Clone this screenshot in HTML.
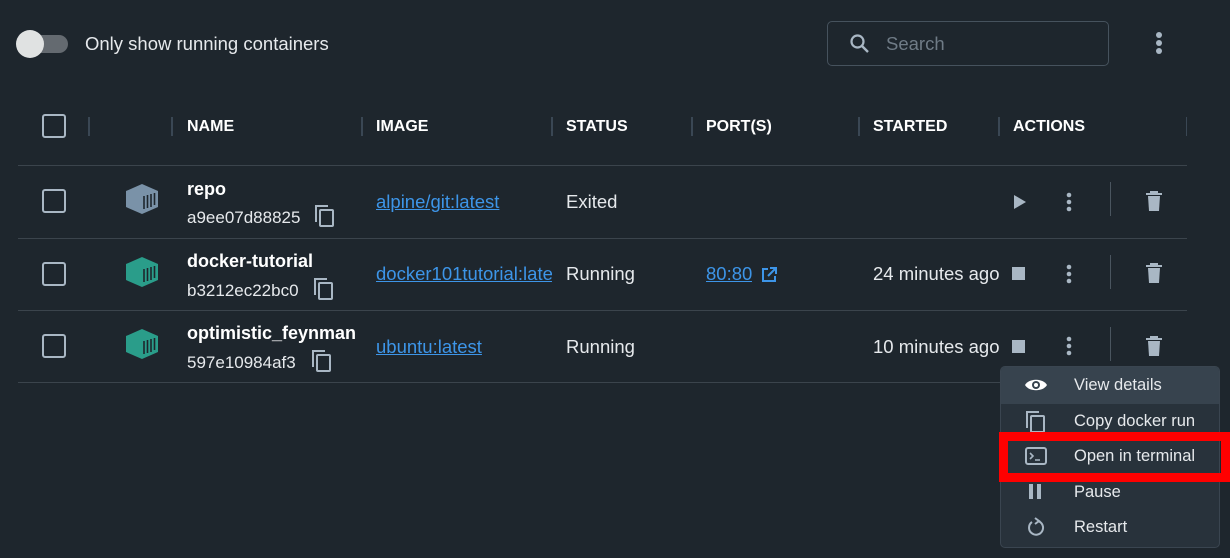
<!DOCTYPE html>
<html><head><meta charset="utf-8"><style>
*{margin:0;padding:0;box-sizing:border-box}
body{width:1230px;height:558px;background:#1e262d;font-family:"Liberation Sans",Arial,sans-serif;color:#e6e9ec;position:relative;overflow:hidden;font-size:18.5px}
.a{position:absolute;white-space:nowrap}
.sep{position:absolute;width:2px;height:19px;background:#3a4754;top:117px}
.hd{position:absolute;top:118px;font-weight:bold;font-size:16px;color:#fff}
.line{position:absolute;left:18px;width:1169px;height:1px;background:#3b444c}
.cb{position:absolute;left:42px;width:24px;height:24px;border:2px solid #a9b7c4;border-radius:3px}
.nm{position:absolute;left:187px;font-weight:bold;font-size:18px;color:#fff}
.id{position:absolute;left:187px;font-size:17px;color:#e6e9ec}
.lk{position:absolute;color:#3d95e8;text-decoration:underline;overflow:hidden;white-space:nowrap}
.vs{position:absolute;left:1110px;width:1px;height:34px;background:#4a555f}
.mi{position:absolute;left:1074px;font-size:16.5px;color:#e6e9ec}
</style></head><body>
<div class="a" style="left:19px;top:35px;width:49px;height:18px;border-radius:9px;background:#646a70"></div>
<div class="a" style="left:16px;top:30px;width:28px;height:28px;border-radius:50%;background:#e0e2e2"></div>
<div class="a" style="left:85px;top:33px;font-size:18.5px;color:#e6e9ec">Only show running containers</div>
<div class="a" style="left:827px;top:21px;width:282px;height:45px;border:1px solid #46525d;border-radius:5px"></div>
<svg class="a" style="left:848px;top:32px" width="24" height="24" viewBox="0 0 24 24"><circle cx="9.5" cy="9.5" r="6" fill="none" stroke="#a9b7c4" stroke-width="2.2"/><path d="M14 14l6 6" stroke="#a9b7c4" stroke-width="2.4"/></svg>
<div class="a" style="left:886px;top:33px;color:#6f7b86">Search</div>
<div class="a" style="left:1156px;top:32px;width:6px;height:6px;border-radius:50%;background:#a9b7c4"></div>
<div class="a" style="left:1156px;top:40px;width:6px;height:6px;border-radius:50%;background:#a9b7c4"></div>
<div class="a" style="left:1156px;top:48px;width:6px;height:6px;border-radius:50%;background:#a9b7c4"></div>
<div class="cb" style="top:114px"></div>
<div class="sep" style="left:88px"></div><div class="sep" style="left:171px"></div><div class="sep" style="left:361px"></div><div class="sep" style="left:551px"></div><div class="sep" style="left:691px"></div><div class="sep" style="left:858px"></div><div class="sep" style="left:998px"></div><div class="sep" style="left:1186px;width:1px"></div>
<div class="hd" style="left:187px">NAME</div><div class="hd" style="left:376px">IMAGE</div><div class="hd" style="left:566px">STATUS</div><div class="hd" style="left:706px">PORT(S)</div><div class="hd" style="left:873px">STARTED</div><div class="hd" style="left:1013px">ACTIONS</div>
<div class="line" style="top:165px"></div><div class="line" style="top:238px"></div><div class="line" style="top:310px"></div><div class="line" style="top:382px"></div>

<div class="cb" style="top:189px"></div><div class="cb" style="top:262px"></div><div class="cb" style="top:334px"></div>
<svg class="a" style="left:124px;top:183px" width="36" height="32" viewBox="0 0 36 32"><path d="M18 1L34 8V24L18 31L2 24V8Z" fill="#7a92a8"/><path d="M20 13v13M23.5 12v13M27 11v13M30.5 10v12" stroke="#1e262d" stroke-width="1.6"/></svg>
<svg class="a" style="left:124px;top:256px" width="36" height="32" viewBox="0 0 36 32"><path d="M18 1L34 8V24L18 31L2 24V8Z" fill="#2a9d8a"/><path d="M20 13v13M23.5 12v13M27 11v13M30.5 10v12" stroke="#1e262d" stroke-width="1.6"/></svg>
<svg class="a" style="left:124px;top:328px" width="36" height="32" viewBox="0 0 36 32"><path d="M18 1L34 8V24L18 31L2 24V8Z" fill="#2a9d8a"/><path d="M20 13v13M23.5 12v13M27 11v13M30.5 10v12" stroke="#1e262d" stroke-width="1.6"/></svg>

<div class="nm" style="top:179px">repo</div><div class="id" style="top:208px">a9ee07d88825</div>
<div class="nm" style="top:251px">docker-tutorial</div><div class="id" style="top:281px">b3212ec22bc0</div>
<div class="nm" style="top:323px">optimistic_feynman</div><div class="id" style="top:353px">597e10984af3</div>
<svg class="a" style="left:314px;top:204px" width="22" height="24" viewBox="0 0 22 24"><path d="M2 18V2h12" fill="none" stroke="#a9b7c4" stroke-width="2"/><rect x="6" y="6" width="13" height="16" rx="1" fill="none" stroke="#a9b7c4" stroke-width="2"/></svg>
<svg class="a" style="left:313px;top:277px" width="22" height="24" viewBox="0 0 22 24"><path d="M2 18V2h12" fill="none" stroke="#a9b7c4" stroke-width="2"/><rect x="6" y="6" width="13" height="16" rx="1" fill="none" stroke="#a9b7c4" stroke-width="2"/></svg>
<svg class="a" style="left:311px;top:349px" width="22" height="24" viewBox="0 0 22 24"><path d="M2 18V2h12" fill="none" stroke="#a9b7c4" stroke-width="2"/><rect x="6" y="6" width="13" height="16" rx="1" fill="none" stroke="#a9b7c4" stroke-width="2"/></svg>

<div class="lk" style="left:376px;top:191px;width:176px">alpine/git:latest</div>
<div class="lk" style="left:376px;top:263px;width:176px">docker101tutorial:latest</div>
<div class="lk" style="left:376px;top:336px;width:176px">ubuntu:latest</div>
<div class="a" style="left:566px;top:191px">Exited</div>
<div class="a" style="left:566px;top:263px">Running</div>
<div class="a" style="left:566px;top:336px">Running</div>
<div class="lk" style="left:706px;top:263px">80:80</div>
<svg class="a" style="left:761px;top:267px" width="16" height="16" viewBox="0 0 16 16"><path d="M7 2H2v12h12V9" fill="none" stroke="#3d95e8" stroke-width="2"/><path d="M9 1h6v6M15 1L7 9" fill="none" stroke="#3d95e8" stroke-width="2"/></svg>
<div class="a" style="left:873px;top:263px;width:126px;overflow:hidden">24 minutes ago</div>
<div class="a" style="left:873px;top:336px;width:126px;overflow:hidden">10 minutes ago</div>

<svg class="a" style="left:1013px;top:194px" width="14" height="16" viewBox="0 0 14 16"><path d="M1 1L13 8L1 15Z" fill="#a9b7c4"/></svg>
<div class="a" style="left:1012px;top:267px;width:13px;height:13px;background:#a9b7c4"></div>
<div class="a" style="left:1012px;top:340px;width:13px;height:13px;background:#a9b7c4"></div>
<svg class="a" style="left:1065px;top:192px" width="8" height="20"><circle cx="4" cy="3" r="2.3" fill="#a9b7c4"/><circle cx="4" cy="10" r="2.3" fill="#a9b7c4"/><circle cx="4" cy="17" r="2.3" fill="#a9b7c4"/></svg>
<svg class="a" style="left:1065px;top:264px" width="8" height="20"><circle cx="4" cy="3" r="2.3" fill="#a9b7c4"/><circle cx="4" cy="10" r="2.3" fill="#a9b7c4"/><circle cx="4" cy="17" r="2.3" fill="#a9b7c4"/></svg>
<svg class="a" style="left:1065px;top:336px" width="8" height="20"><circle cx="4" cy="3" r="2.3" fill="#a9b7c4"/><circle cx="4" cy="10" r="2.3" fill="#a9b7c4"/><circle cx="4" cy="17" r="2.3" fill="#a9b7c4"/></svg>
<div class="vs" style="top:182px"></div><div class="vs" style="top:255px"></div><div class="vs" style="top:327px"></div>
<svg class="a" style="left:1145px;top:191px" width="18" height="20" viewBox="0 0 18 20"><path d="M1 3h16M6 3V1h6v2" stroke="#a9b7c4" stroke-width="2" fill="none"/><path d="M3 5h12l-1 15H4Z" fill="#a9b7c4"/></svg>
<svg class="a" style="left:1145px;top:263px" width="18" height="20" viewBox="0 0 18 20"><path d="M1 3h16M6 3V1h6v2" stroke="#a9b7c4" stroke-width="2" fill="none"/><path d="M3 5h12l-1 15H4Z" fill="#a9b7c4"/></svg>
<svg class="a" style="left:1145px;top:336px" width="18" height="20" viewBox="0 0 18 20"><path d="M1 3h16M6 3V1h6v2" stroke="#a9b7c4" stroke-width="2" fill="none"/><path d="M3 5h12l-1 15H4Z" fill="#a9b7c4"/></svg>

<div class="a" style="left:1000px;top:366px;width:220px;height:182px;background:#28323b;border-radius:5px;border:1px solid #3a4550;overflow:hidden"><div style="height:37px;background:#37434e"></div></div>
<svg class="a" style="left:1024px;top:377px" width="24" height="16" viewBox="0 0 24 16"><path d="M1 8C5 1 19 1 23 8C19 15 5 15 1 8Z" fill="#fff"/><circle cx="12" cy="8" r="4" fill="#37434e"/><circle cx="12" cy="8" r="2" fill="#fff"/></svg>
<div class="mi" style="top:376px">View details</div>
<svg class="a" style="left:1025px;top:410px" width="22" height="24" viewBox="0 0 22 24"><path d="M2 18V2h12" fill="none" stroke="#a9b7c4" stroke-width="2"/><rect x="6" y="6" width="13" height="16" rx="1" fill="none" stroke="#a9b7c4" stroke-width="2"/></svg>
<div class="mi" style="top:412px">Copy docker run</div>
<svg class="a" style="left:1025px;top:447px" width="22" height="18" viewBox="0 0 22 18"><rect x="1" y="1" width="20" height="16" rx="2" fill="none" stroke="#a9b7c4" stroke-width="2"/><path d="M5 6l3 3-3 3M10 13h5" fill="none" stroke="#a9b7c4" stroke-width="1.6"/></svg>
<div class="mi" style="top:447px">Open in terminal</div>
<div class="a" style="left:1029px;top:484px;width:4px;height:15px;background:#a9b7c4"></div>
<div class="a" style="left:1037px;top:484px;width:4px;height:15px;background:#a9b7c4"></div>
<div class="mi" style="top:483px">Pause</div>
<svg class="a" style="left:1026px;top:517px" width="20" height="20" viewBox="0 0 20 20"><path d="M6 5A7 7 0 1 0 12 4" fill="none" stroke="#a9b7c4" stroke-width="2"/><path d="M9 1l4 3-4 3" fill="none" stroke="#a9b7c4" stroke-width="2"/></svg>
<div class="mi" style="top:518px">Restart</div>
<div class="a" style="left:999px;top:432px;width:231px;height:50px;border:9px solid #ff0000"></div>
</body></html>
